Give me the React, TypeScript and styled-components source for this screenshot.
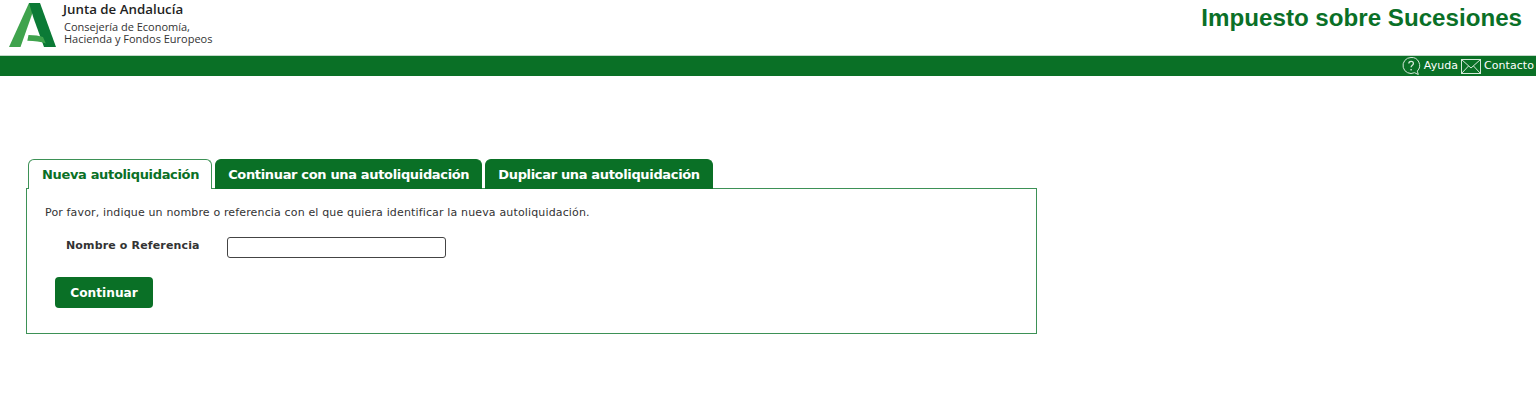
import React from "react";
import styled, { createGlobalStyle } from "styled-components";

const Global = createGlobalStyle`
  html, body { margin: 0; padding: 0; background: #fff; }
  body { font-family: "DejaVu Sans", Verdana, sans-serif; overflow: hidden; }
`;

const Page = styled.div`
  width: 1536px;
  height: 410px;
`;

const Header = styled.header`
  height: 55px;
  display: flex;
  justify-content: space-between;
  border-bottom: 1px solid #c3d9c9;
`;

const Brand = styled.div`
  display: flex;
  padding-left: 9px;
`;

const LogoMark = styled.svg`
  width: 48px;
  height: 48px;
  margin-right: 6px;
`;

const BrandText = styled.div`
  font-family: "Open Sans", "Noto Sans", sans-serif;
  color: #333;
`;

const BrandName = styled.div`
  font-size: 13.3px;
  font-weight: 600;
  line-height: 18px;
  color: #1f1f1f;
  margin-bottom: 3px;
`;

const BrandDept = styled.div`
  font-size: 11px;
  line-height: 12px;
  margin-left: 1px;
`;

const Title = styled.h1`
  margin: 3px 14px 0 0;
  font-family: "Liberation Sans", Arial, sans-serif;
  font-size: 24.15px;
  line-height: 30px;
  font-weight: 700;
  color: #0a7027;
`;

const Bar = styled.nav`
  height: 20px;
  background: #0a7026;
  display: flex;
  justify-content: flex-end;
  align-items: center;
  padding-right: 2px;
  color: #fff;
  font-family: "DejaVu Sans", sans-serif;
  font-size: 11px;
  letter-spacing: 0.05px;
`;

const BarLink = styled.a`
  display: flex;
  align-items: center;
  gap: 3px;
  margin-left: 3px;
  color: #fff;
`;

const BarLabel = styled.span`
  padding-bottom: 2px;
`;

const Main = styled.main`
  padding: 83px 0 0 26px;
  width: 1011px;
`;

const Tabs = styled.div`
  display: flex;
  gap: 3px;
  padding-left: 2px;
  height: 30px;
  margin-bottom: -1px;
  position: relative;
  z-index: 1;
`;

const Tab = styled.div<{ $active?: boolean }>`
  box-sizing: border-box;
  height: 30px;
  padding: 0 12px 0 ${(p) => (p.$active ? "13px" : "12px")};
  display: flex;
  align-items: center;
  font-size: 13px;
  letter-spacing: -0.34px;
  font-weight: 700;
  border-radius: 6px 6px 0 0;
  border: 1px solid ${(p) => (p.$active ? "#3d9156" : "#0a7026")};
  border-bottom: none;
  background: ${(p) => (p.$active ? "#fff" : "#0a7026")};
  color: ${(p) => (p.$active ? "#0a7026" : "#fff")};
`;

const Panel = styled.section`
  box-sizing: border-box;
  height: 146px;
  border: 1px solid #3d9156;
  padding: 17px 0 0 18px;
`;

const Intro = styled.p`
  margin: 0 0 17px;
  font-size: 11px;
  letter-spacing: 0.15px;
  line-height: 14px;
  color: #333;
`;

const Field = styled.div`
  display: flex;
  align-items: center;
  padding-left: 21px;
  margin-bottom: 19px;
`;

const Label = styled.label`
  width: 161px;
  padding-bottom: 4px;
  font-size: 11px;
  letter-spacing: 0.15px;
  font-weight: 700;
  color: #333;
`;

const Input = styled.input`
  box-sizing: border-box;
  width: 219px;
  height: 21px;
  border: 1px solid #444;
  border-radius: 3px;
  background: #fff;
  padding: 0 4px;
`;

const Button = styled.button`
  display: block;
  margin-left: 10px;
  width: 98px;
  height: 31px;
  padding: 1px 0 0;
  border: none;
  border-radius: 4px;
  background: #0a7026;
  color: #fff;
  font-family: "DejaVu Sans", sans-serif;
  font-size: 12.2px;
  font-weight: 700;
`;

const HelpIcon = () => (
  <svg width="20" height="20" viewBox="0 0 20 20" fill="none" stroke="#d6e8da" strokeWidth="1">
    <path d="M10 1.5a8 8 0 1 0 3.5 15.2l3.8 1.8-1-3.4A8 8 0 0 0 10 1.5z" />
    <path d="M7.8 7.6c0-3 4.6-3 4.6-.2 0 1.8-2.3 1.9-2.3 3.9" strokeWidth="1.3" />
    <circle cx="10.1" cy="13.8" r=".8" fill="#fff" stroke="none" />
  </svg>
);

const MailIcon = () => (
  <svg width="20" height="15" viewBox="0 0 20 15" fill="none" stroke="#d6e8da" strokeWidth="1">
    <rect x=".5" y=".5" width="19" height="14" />
    <path d="M.5.5 10 9 19.5.5M.5 14.5 7.5 7M19.5 14.5 12.5 7" />
  </svg>
);

export default function App() {
  return (
    <Page>
      <Global />
      <Header>
        <Brand>
          <LogoMark viewBox="0 0 48 48">
            <path d="M20 3h7L11.500 47H0z" fill="#3fa34d" />
            <path d="M20 3h11l16 44H35L24.500 18z" fill="#0b7a36" />
            <path d="M19.500 35c6 .1 11 .8 14.500 2l2.800 6.500c-5-2-11-2.800-18.500-2.800z" fill="#3fa34d" />
          </LogoMark>
          <BrandText>
            <BrandName>Junta de Andalucía</BrandName>
            <BrandDept>Consejería de Economía,</BrandDept>
            <BrandDept>Hacienda y Fondos Europeos</BrandDept>
          </BrandText>
        </Brand>
        <Title>Impuesto sobre Sucesiones</Title>
      </Header>
      <Bar>
        <BarLink><HelpIcon /><BarLabel>Ayuda</BarLabel></BarLink>
        <BarLink><MailIcon /><BarLabel>Contacto</BarLabel></BarLink>
      </Bar>
      <Main>
        <Tabs>
          <Tab $active>Nueva autoliquidación</Tab>
          <Tab>Continuar con una autoliquidación</Tab>
          <Tab>Duplicar una autoliquidación</Tab>
        </Tabs>
        <Panel>
          <Intro>Por favor, indique un nombre o referencia con el que quiera identificar la nueva autoliquidación.</Intro>
          <Field>
            <Label>Nombre o Referencia</Label>
            <Input />
          </Field>
          <Button>Continuar</Button>
        </Panel>
      </Main>
    </Page>
  );
}
